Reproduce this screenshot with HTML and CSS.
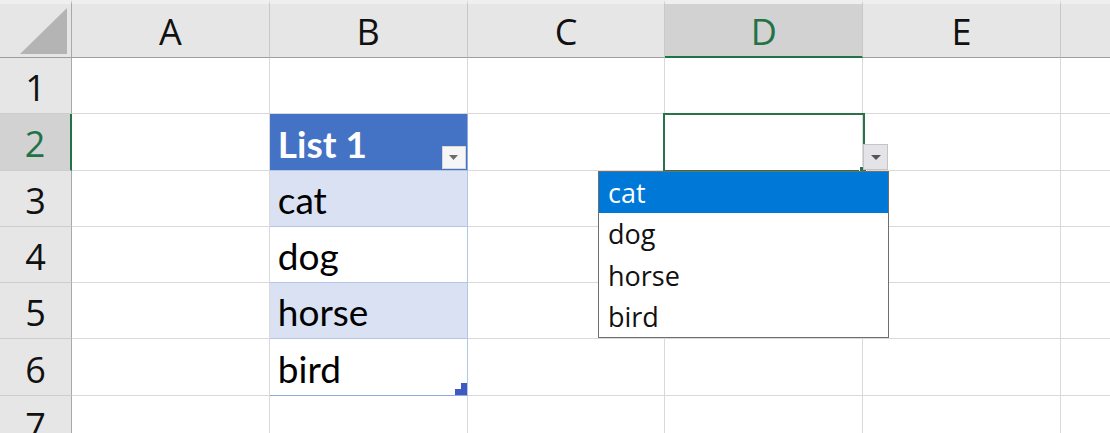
FILE: index.html
```html
<!DOCTYPE html>
<html>
<head>
<meta charset="utf-8">
<link rel="stylesheet" href="styles.css">
</head>
<body>
<div class="sheet">
  <div class="grid">
    <div class="hd corner"><svg class="tri" width="50" height="48" viewBox="0 0 50 48"><polygon points="48,1 48,47 1,47" fill="#b4b4b4"/></svg></div>
    <div class="hd col">A</div>
    <div class="hd col">B</div>
    <div class="hd col">C</div>
    <div class="hd col sel-col">D</div>
    <div class="hd col">E</div>
    <div class="hd col"></div>

    <div class="hd row">1</div>
    <div class="c"></div><div class="c"></div><div class="c"></div><div class="c"></div><div class="c"></div><div class="c"></div>

    <div class="hd row sel-row">2</div>
    <div class="c"></div>
    <div class="c t th">List 1<span class="filter"><svg width="9" height="5" viewBox="0 0 9 5"><polygon points="0,0 9,0 4.5,5" fill="#6d6d6d"/></svg></span></div>
    <div class="c"></div><div class="c"></div><div class="c"></div><div class="c"></div>

    <div class="hd row">3</div>
    <div class="c"></div><div class="c t band">cat</div><div class="c"></div><div class="c"></div><div class="c"></div><div class="c"></div>

    <div class="hd row">4</div>
    <div class="c"></div><div class="c t">dog</div><div class="c"></div><div class="c"></div><div class="c"></div><div class="c"></div>

    <div class="hd row">5</div>
    <div class="c"></div><div class="c t band">horse</div><div class="c"></div><div class="c"></div><div class="c"></div><div class="c"></div>

    <div class="hd row">6</div>
    <div class="c"></div><div class="c t last">bird<span class="handle"></span></div><div class="c"></div><div class="c"></div><div class="c"></div><div class="c"></div>

    <div class="hd row">7</div>
    <div class="c"></div><div class="c"></div><div class="c"></div><div class="c"></div><div class="c"></div><div class="c"></div>
  </div>

  <div class="selection"><span class="sel-handle"></span></div>
  <div class="dd-btn"><svg width="10" height="5" viewBox="0 0 10 5"><polygon points="0,0 10,0 5,5" fill="#555"/></svg></div>
  <ul class="dd-list">
    <li class="active">cat</li>
    <li>dog</li>
    <li>horse</li>
    <li>bird</li>
  </ul>
</div>
</body>
</html>
```

FILE: styles.css
```css
html, body {
  margin: 0;
  padding: 0;
  background: #ffffff;
  overflow: hidden;
}
.sheet {
  position: relative;
  width: 1110px;
  height: 433px;
  overflow: hidden;
}
.grid {
  display: grid;
  grid-template-columns: 72px repeat(6, 197.8px);
  grid-template-rows: 58px repeat(7, 56.3px);
}
.hd {
  box-sizing: border-box;
  background: #e6e6e6;
  font-family: "Open Sans", "Noto Sans", sans-serif;
  font-size: 36px;
  color: #111;
  display: flex;
  align-items: center;
  justify-content: center;
}
.corner {
  border-top: 4px solid #efefef;
  border-right: 1px solid #a9a9a9;
  border-bottom: 1px solid #9d9d9d;
  position: relative;
}
.corner .tri {
  position: absolute;
  right: 2px;
  bottom: 2px;
}
.col {
  border-top: 4px solid #efefef;
  border-right: 1px solid #c9c9c9;
  border-bottom: 1px solid #9d9d9d;
  padding-top: 2px;
}
.sel-col {
  background: #d2d2d2;
  color: #217346;
  border-bottom: 2px solid #217346;
}
.row {
  border-right: 1px solid #a9a9a9;
  border-bottom: 1px solid #cdcdcd;
  padding-top: 4px;
}
.sel-row {
  background: #d2d2d2;
  color: #217346;
  border-right: 2px solid #217346;
}
.c {
  box-sizing: border-box;
  border-right: 1px solid #d9d9d9;
  border-bottom: 1px solid #d9d9d9;
  font-family: "Lato", "Open Sans", sans-serif;
  font-size: 37px;
  color: #000;
  display: flex;
  align-items: flex-end;
  padding: 0 8px 6px 8px;
  line-height: 40px;
  position: relative;
}
.t {
  border-right: 1px solid #b4c6e7;
  border-bottom: 1px solid #b4c6e7;
}
.th {
  background: #4472c4;
  color: #ffffff;
  font-weight: 700;
  border-right-color: #8ea9db;
}
.band {
  background: #d9e1f2;
}
.last {
  border-bottom-color: #8ea9db;
}
.filter {
  position: absolute;
  right: 1px;
  bottom: 1px;
  width: 24px;
  height: 23px;
  box-sizing: border-box;
  background: #f6f6f6;
  border: 1px solid #d6d6d6;
  display: flex;
  align-items: center;
  justify-content: center;
}
.handle {
  position: absolute;
  right: 0;
  bottom: 0;
  width: 12px;
  height: 12px;
  background: linear-gradient(#3f5bbf, #3f5bbf) right top / 6px 6px no-repeat,
              linear-gradient(#3f5bbf, #3f5bbf) left bottom / 12px 6px no-repeat;
}
.selection {
  position: absolute;
  left: 663px;
  top: 113px;
  width: 202px;
  height: 59px;
  box-sizing: border-box;
  border: 2px solid #2a7248;
}
.sel-handle {
  position: absolute;
  right: -4px;
  bottom: -4px;
  width: 6px;
  height: 6px;
  background: #2a7248;
  border: 1px solid #fff;
}
.dd-btn {
  position: absolute;
  left: 863px;
  top: 144px;
  width: 25px;
  height: 26px;
  box-sizing: border-box;
  background: #e4e4e8;
  border: 1px solid #c4c4c4;
  display: flex;
  align-items: center;
  justify-content: center;
}
.dd-list {
  position: absolute;
  left: 598px;
  top: 171px;
  width: 291px;
  margin: 0;
  padding: 0;
  list-style: none;
  box-sizing: border-box;
  background: #ffffff;
  border: 1px solid #6f6f6f;
  font-family: "Open Sans", "Noto Sans", sans-serif;
  font-size: 27px;
  color: #111;
}
.dd-list li {
  height: 41.3px;
  line-height: 41.3px;
  padding-left: 9px;
}
.dd-list li.active {
  background: #0078d7;
  color: #ffffff;
}
```
